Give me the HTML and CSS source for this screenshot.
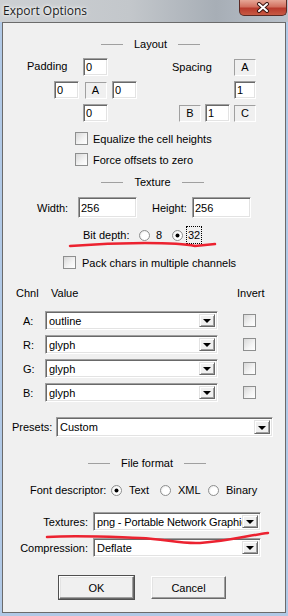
FILE: index.html
```html
<!DOCTYPE html>
<html lang="en">
<head>
  <meta charset="UTF-8" />
  <title>Export Options</title>
  <link rel="stylesheet" href="styles.css">
</head>
<body>
  <div class="window">
    <div class="titlebar">
      <span class="title">Export Options</span>
      <button class="close" aria-label="Close">
        <svg width="14" height="11" viewBox="0 0 14 11">
          <path d="M3 2 L11 9 M11 2 L3 9" stroke="#3a1612" stroke-width="4" stroke-linecap="round" />
          <path d="M3 2 L11 9 M11 2 L3 9" stroke="#fff" stroke-width="2" stroke-linecap="round" />
        </svg>
      </button>
    </div>

    <div class="client">
      <div class="section-head head-layout"><span class="rule"></span><span>Layout</span><span class="rule"></span></div>

      <div class="layout-row">
        <div class="pad-grid">
          <span class="grid-label pad-label">Padding</span>
          <input class="edit r1 c2" value="0" />
          <input class="edit r2 c1" value="0" />
          <span class="static r2 c2">A</span>
          <input class="edit r2 c3" value="0" />
          <input class="edit r3 c2" value="0" />
        </div>
        <div class="spc-grid">
          <span class="grid-label spc-label">Spacing</span>
          <span class="static r1 c3">A</span>
          <input class="edit r2 c3" value="1" />
          <span class="static r3 c1">B</span>
          <input class="edit r3 c2" value="1" />
          <span class="static r3 c3">C</span>
        </div>
      </div>

      <div class="check-row check-equal"><span class="checkbox"></span><span>Equalize the cell heights</span></div>
      <div class="check-row check-force"><span class="checkbox"></span><span>Force offsets to zero</span></div>

      <div class="section-head head-texture"><span class="rule"></span><span>Texture</span><span class="rule"></span></div>

      <div class="size-row">
        <span class="size-label">Width:</span>
        <input class="edit size-edit" value="256" />
        <span class="size-label height-label">Height:</span>
        <input class="edit size-edit" value="256" />
      </div>

      <div class="radio-row depth-row">
        <span class="row-label depth-label">Bit depth:</span>
        <span class="opt opt-8"><span class="radio"></span><span class="opt-text">8</span></span>
        <span class="opt"><span class="radio checked"></span><span class="opt-text focus">32</span></span>
      </div>

      <div class="check-row check-pack"><span class="checkbox"></span><span>Pack chars in multiple channels</span></div>

      <div class="col-head">
        <span class="col-chnl">Chnl</span>
        <span class="col-value">Value</span>
        <span>Invert</span>
      </div>

      <div class="channels">
        <div class="chan-row">
          <span class="chan-label">A:</span>
          <div class="combo chan-combo"><span class="combo-text">outline</span><span class="combo-btn"></span></div>
          <span class="checkbox invert"></span>
        </div>
        <div class="chan-row">
          <span class="chan-label">R:</span>
          <div class="combo chan-combo"><span class="combo-text">glyph</span><span class="combo-btn"></span></div>
          <span class="checkbox invert"></span>
        </div>
        <div class="chan-row">
          <span class="chan-label">G:</span>
          <div class="combo chan-combo"><span class="combo-text">glyph</span><span class="combo-btn"></span></div>
          <span class="checkbox invert"></span>
        </div>
        <div class="chan-row">
          <span class="chan-label">B:</span>
          <div class="combo chan-combo"><span class="combo-text">glyph</span><span class="combo-btn"></span></div>
          <span class="checkbox invert"></span>
        </div>
      </div>

      <div class="presets-row">
        <span class="presets-label">Presets:</span>
        <div class="combo presets-combo"><span class="combo-text">Custom</span><span class="combo-btn"></span></div>
      </div>

      <div class="section-head head-file"><span class="rule"></span><span>File format</span><span class="rule"></span></div>

      <div class="radio-row fd-row">
        <span class="row-label fd-label">Font descriptor:</span>
        <span class="opt opt-text-w"><span class="radio checked"></span><span class="opt-text">Text</span></span>
        <span class="opt opt-xml"><span class="radio"></span><span class="opt-text">XML</span></span>
        <span class="opt"><span class="radio"></span><span class="opt-text">Binary</span></span>
      </div>

      <div class="format-row textures-row">
        <span class="format-label">Textures:</span>
        <div class="combo format-combo"><span class="combo-text tight">png - Portable Network Graphics</span><span class="combo-btn"></span></div>
      </div>
      <div class="format-row compression-row">
        <span class="format-label">Compression:</span>
        <div class="combo format-combo"><span class="combo-text">Deflate</span><span class="combo-btn"></span></div>
      </div>

      <div class="buttons">
        <button class="btn btn-default">OK</button>
        <button class="btn">Cancel</button>
      </div>
    </div>

    <!-- red marker strokes drawn over the dialog -->
    <svg class="marks" width="288" height="616" viewBox="0 0 288 616">
      <path d="M70 246 Q108 243 145 243 T195 246 L215 244" />
      <path d="M47 537 C80 535 110 537 140 538 C165 539 180 544 200 543 C230 541 250 535 268 533" />
    </svg>
  </div>
</body>
</html>
```

FILE: styles.css
```css
* {
  box-sizing: border-box;
}

body {
  margin: 0;
  font-family: "Liberation Sans", Arial, sans-serif;
  font-size: 11px;
  color: #000;
}

.window {
  position: relative;
  width: 288px;
  height: 616px;
  background: #b1c9e6;
  display: flex;
  flex-direction: column;
}

.titlebar {
  height: 22px;
  display: flex;
  align-items: flex-start;
  justify-content: space-between;
  background: linear-gradient(90deg, #cdd0d3 0%, #c3c7cb 45%, #a7aeb6 75%, #b9c1ca 100%);
}

.title {
  font-family: "Open Sans", "Noto Sans", sans-serif;
  font-size: 12px;
  line-height: 16px;
  color: #1b1b1b;
  padding: 3px 0 0 3px;
  text-shadow: 0 0 5px #fff, 0 0 3px #fff;
}

.close {
  width: 48px;
  height: 16px;
  margin-right: 1px;
  padding: 0;
  border: 1px solid #5b2a24;
  border-top: none;
  border-radius: 0 0 5px 5px;
  background: linear-gradient(#e6a696, #d2705f 45%, #b83a2c 55%, #c85a44);
  display: flex;
  align-items: center;
  justify-content: center;
}

.client {
  flex: 1;
  margin: 0 2px 3px 2px;
  border: 1px solid #6b6b6b;
  background: #f0f0f0;
  display: flex;
  flex-direction: column;
}

/* section headers */
.section-head {
  display: flex;
  align-items: center;
  justify-content: center;
  gap: 11px;
  height: 14px;
}

.rule {
  width: 22px;
  height: 1px;
  background: #a0a0a0;
}

.head-layout { margin-top: 14px; padding-left: 13px; }
.head-texture { margin-top: 9px; padding-left: 17px; }
.head-file { margin-top: 19px; padding-left: 6px; }

/* controls */
.edit {
  font: inherit;
  color: #000;
  background: #fff;
  padding: 0 2px;
  margin: 0;
  border: 1px solid;
  border-color: #a0a0a0 #fff #fff #a0a0a0;
  box-shadow: inset 1px 1px #696969, inset -1px -1px #e3e3e3;
  outline: none;
  width: 100%;
  height: 100%;
}

.static {
  width: 22px;
  height: 17px;
  justify-self: center;
  align-self: center;
  display: flex;
  align-items: center;
  justify-content: center;
  border: 1px solid;
  border-color: #a0a0a0 #fff #fff #a0a0a0;
}

.checkbox {
  width: 13px;
  height: 13px;
  flex: none;
  border: 1px solid #8e8f8f;
  background: linear-gradient(135deg, #d8d8d8, #f4f4f4 60%, #fff);
}

.radio {
  width: 11px;
  height: 11px;
  flex: none;
  border-radius: 50%;
  border: 1px solid #8e8f8f;
  background: radial-gradient(circle at 60% 60%, #fff 45%, #dedede);
  position: relative;
}

.radio.checked::after {
  content: "";
  position: absolute;
  left: 3px;
  top: 3px;
  width: 3px;
  height: 3px;
  border-radius: 50%;
  background: #000;
  box-shadow: 0 0 0 0.5px #000;
}

.combo {
  display: flex;
  height: 19px;
  background: #fff;
  border: 1px solid;
  border-color: #a0a0a0 #fff #fff #a0a0a0;
  box-shadow: inset 1px 1px #696969, inset -1px -1px #e3e3e3;
  padding: 2px;
}

.combo-text {
  flex: 1;
  min-width: 0;
  overflow: hidden;
  white-space: nowrap;
  padding-left: 1px;
  line-height: 14px;
}

.combo-text.tight {
  letter-spacing: -0.15px;
}

.combo-btn {
  width: 16px;
  flex: none;
  background: #f0f0f0;
  border: 1px solid;
  border-color: #e3e3e3 #696969 #696969 #e3e3e3;
  box-shadow: inset 1px 1px #fff, inset -1px -1px #a0a0a0;
  display: flex;
  align-items: center;
  justify-content: center;
}

.combo-btn::after {
  content: "";
  border-left: 4px solid transparent;
  border-right: 4px solid transparent;
  border-top: 4px solid #000;
  margin-top: 1px;
}

/* layout section */
.layout-row {
  margin-top: 7px;
  padding-left: 51px;
  display: flex;
  gap: 42px;
}

.pad-grid,
.spc-grid {
  display: grid;
  grid-template-rows: repeat(3, 18px);
  row-gap: 5px;
  column-gap: 4px;
}

.pad-grid { grid-template-columns: repeat(3, 25px); }
.spc-grid { grid-template-columns: 22px 25px 22px; column-gap: 4px; }

.r1 { grid-row: 1; }
.r2 { grid-row: 2; }
.r3 { grid-row: 3; }
.c1 { grid-column: 1; }
.c2 { grid-column: 2; }
.c3 { grid-column: 3; }

.grid-label {
  grid-row: 1;
  align-self: center;
  white-space: nowrap;
}

.pad-label { grid-column: 1; margin-left: -27px; margin-top: -2px; }
.spc-label { grid-column: 1 / span 2; margin-left: -7px; }

.check-row {
  display: flex;
  align-items: center;
  gap: 5px;
  height: 13px;
}

.check-equal { margin-top: 10px; padding-left: 72px; }
.check-force { margin-top: 8px; padding-left: 72px; }
.check-pack { margin-top: 13px; padding-left: 60px; gap: 6px; }

/* texture section */
.size-row {
  margin-top: 8px;
  padding-left: 34px;
  display: flex;
  height: 21px;
  align-items: center;
}

.size-label { width: 41px; }
.height-label { width: 55px; padding-left: 15px; }
.size-edit { width: 59px; }

.radio-row {
  display: flex;
  align-items: center;
}

.opt {
  display: flex;
  align-items: center;
}

.opt-text { margin-left: 6px; }

.depth-row { margin-top: 9px; padding-left: 80px; height: 16px; }
.depth-label { width: 56px; }
.opt-8 { width: 33px; }

.focus {
  margin-left: 3px;
  padding: 2px 1px;
  border: 1px dotted #000;
}

.col-head {
  margin-top: 17px;
  padding-left: 13px;
  height: 14px;
  display: flex;
  align-items: center;
}

.col-chnl { width: 35px; }
.col-value { width: 186px; }

.channels {
  margin-top: 11px;
  display: flex;
  flex-direction: column;
  gap: 5px;
}

.chan-row {
  display: flex;
  align-items: center;
  padding-left: 20px;
}

.chan-label { width: 22px; }
.chan-combo { width: 173px; }
.invert { margin-left: 25px; }

.presets-row {
  margin-top: 15px;
  padding-left: 9px;
  display: flex;
  align-items: center;
}

.presets-label { width: 44px; }
.presets-combo { width: 217px; height: 20px; }

/* file format section */
.fd-row { margin-top: 13px; padding-left: 27px; height: 14px; }
.fd-label { width: 81px; }
.opt-text-w { width: 49px; }
.opt-xml { width: 48px; }
.fd-row .opt-text { margin-left: 7px; }

.format-row {
  display: flex;
  align-items: center;
}

.textures-row { margin-top: 15px; }
.compression-row { margin-top: 7px; }

.format-label {
  width: 90px;
  text-align: right;
  padding-right: 5px;
}

.format-combo { width: 168px; }

.buttons {
  margin-top: 19px;
  padding-left: 56px;
  display: flex;
  gap: 17px;
}

.btn {
  width: 75px;
  height: 23px;
  font: inherit;
  color: #000;
  background: #f0f0f0;
  border: 1px solid;
  border-color: #fff #696969 #696969 #fff;
  box-shadow: inset -1px -1px #a0a0a0, inset 1px 1px #e3e3e3;
  padding: 0;
}

.btn-default {
  outline: 1px solid #505050;
}

.marks {
  position: absolute;
  left: 0;
  top: 0;
  pointer-events: none;
}

.marks path {
  fill: none;
  stroke: #ec2230;
  stroke-width: 2.5;
  stroke-linecap: round;
}
```
